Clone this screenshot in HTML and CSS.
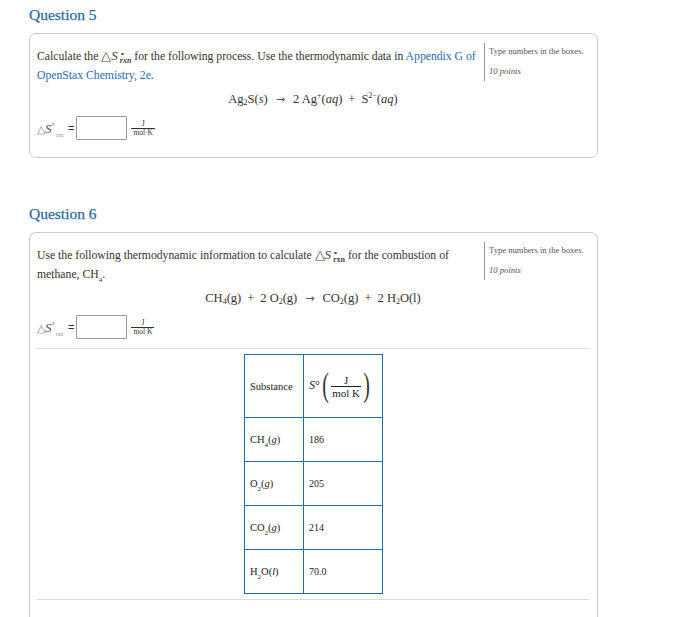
FILE: index.html
```html
<!DOCTYPE html>
<html>
<head>
<meta charset="utf-8">
<link rel="stylesheet" href="styles.css">
</head>
<body>
<main class="page">
  <section class="question">
    <h2 class="q-title">Question 5</h2>
    <div class="card">
      <div class="card-top">
        <div class="prompt">Calculate the <span class="m">△<i>S</i><span class="supsub"><span class="sp">∘</span><span class="sb"><i>rxn</i></span></span></span> for the following process. Use the thermodynamic data in <a class="link">Appendix G of OpenStax Chemistry, 2e</a>.</div>
        <aside class="meta"><p class="meta-note">Type numbers in the boxes.</p><p class="meta-pts">10 points</p></aside>
      </div>
      <div class="equation">Ag<sub>2</sub>S(<i>s</i>)<span class="arrow">→</span>2 Ag<sup>+</sup>(<i>aq</i>)<span class="op">+</span>S<sup>2−</sup>(<i>aq</i>)</div>
      <div class="answer">
        <span class="ds"><span class="tri">△</span><i>S</i><span class="deg">°</span><span class="rxn">rxn</span></span>
        <span class="eq">=</span>
        <span class="box"></span>
        <span class="frac"><span class="num">J</span><span class="den">mol·K</span></span>
      </div>
    </div>
  </section>

  <section class="question q6">
    <h2 class="q-title">Question 6</h2>
    <div class="card open">
      <div class="card-top">
        <div class="prompt">Use the following thermodynamic information to calculate <span class="m">△<i>S</i><span class="supsub"><span class="sp">∘</span><span class="sb">rxn</span></span></span> for the combustion of methane, CH<sub class="low">4</sub>.</div>
        <aside class="meta"><p class="meta-note">Type numbers in the boxes.</p><p class="meta-pts">10 points</p></aside>
      </div>
      <div class="equation">CH<sub>4</sub>(g)<span class="op">+</span>2 O<sub>2</sub>(g)<span class="arrow">→</span>CO<sub>2</sub>(g)<span class="op">+</span>2 H<sub>2</sub>O(l)</div>
      <div class="answer">
        <span class="ds"><span class="tri">△</span><i>S</i><span class="deg">°</span><span class="rxn">rxn</span></span>
        <span class="eq">=</span>
        <span class="box"></span>
        <span class="frac"><span class="num">J</span><span class="den">mol K</span></span>
      </div>
      <div class="divider"></div>
      <table class="data">
        <tr class="head">
          <td>Substance</td>
          <td><span class="sdeg"><i>S</i>°</span><span class="paren">(</span><span class="hfrac"><span class="num">J</span><span class="den">mol K</span></span><span class="paren">)</span></td>
        </tr>
        <tr><td>CH<sub class="low">4</sub>(<i>g</i>)</td><td class="val">186</td></tr>
        <tr><td>O<sub class="low">2</sub>(<i>g</i>)</td><td class="val">205</td></tr>
        <tr><td>CO<sub class="low">2</sub>(<i>g</i>)</td><td class="val">214</td></tr>
        <tr><td>H<sub class="low">2</sub>O(<i>l</i>)</td><td class="val">70.0</td></tr>
      </table>
      <div class="divider bottom"></div>
    </div>
  </section>
</main>
</body>
</html>
```
FILE: styles.css
```css
html, body {
  margin: 0;
  padding: 0;
  background: #fff;
}
body {
  font-family: "Liberation Serif", serif;
  color: #333;
  height: 617px;
  overflow: hidden;
}
.page {
  padding: 0 86px 0 29px;
}
.q-title {
  margin: 0;
  padding-top: 5px;
  font-size: 15.5px;
  font-weight: normal;
  color: #2d6aa3;
  -webkit-text-stroke: 0.25px #2d6aa3;
  line-height: 19px;
  height: 19px;
  margin-bottom: 9px;
}
.q6 {
  margin-top: 41px;
}
.card {
  border: 1px solid #ccc;
  border-radius: 7px;
  padding: 9px 8px 0 7px;
  box-sizing: border-box;
  height: 125px;
}
.card.open {
  height: 420px;
  border-bottom: none;
  border-bottom-left-radius: 0;
  border-bottom-right-radius: 0;
}
.card-top {
  display: flex;
  align-items: flex-start;
}
.prompt {
  width: 440px;
  font-size: 11.7px;
  line-height: 19px;
  padding-top: 3px;
  color: #333;
}
.link {
  color: #2b6cb0;
}
.m {
  font-size: 13px;
  color: #444;
}
.supsub {
  display: inline-block;
  vertical-align: -3px;
  line-height: 6px;
  font-size: 8px;
  margin-left: 2px;
}
.supsub span {
  display: block;
}
.supsub .sb {
  font-weight: bold;
}
.meta {
  margin-left: 7px;
  border-left: 1px solid #999;
  padding: 3px 0 0 4px;
  height: 35px;
}
.meta p {
  margin: 0;
  font-size: 8.6px;
  color: #555;
  line-height: 10px;
  white-space: nowrap;
}
.meta-pts {
  margin-top: 10px !important;
  font-style: italic;
}
.equation {
  font-size: 12.5px;
  color: #333;
  text-align: center;
  margin-top: 4px;
  line-height: 20px;
}
.equation sub, .equation sup {
  font-size: 8px;
  line-height: 0;
}
.equation sub { vertical-align: -2px; }
.equation sup { vertical-align: 5px; }
.arrow {
  display: inline-block;
  margin: 0 8px;
  font-family: "DejaVu Sans", sans-serif;
  font-size: 11px;
  color: #555;
}
.op {
  display: inline-block;
  margin: 0 6px;
}
.answer {
  display: flex;
  align-items: center;
  margin-top: 6px;
  height: 24px;
}
.ds {
  font-size: 13px;
  color: #555;
  position: relative;
  width: 31px;
  line-height: 14px;
}
.tri {
  color: #888;
  font-size: 11px;
}
.deg {
  font-size: 8px;
  vertical-align: 4px;
}
.rxn {
  position: absolute;
  left: 19px;
  top: 12px;
  font-size: 5.5px;
  color: #888;
  line-height: 6px;
}
.eq {
  font-family: "Liberation Sans", sans-serif;
  font-size: 11px;
  color: #333;
  margin-right: 2px;
}
.box {
  width: 49px;
  height: 22px;
  border: 1px solid #999;
  border-radius: 1px;
}
.frac {
  display: inline-flex;
  flex-direction: column;
  align-items: center;
  margin-left: 4px;
  font-size: 7.5px;
  color: #333;
  line-height: 8px;
}
.frac .den {
  border-top: 1px solid #333;
  padding: 0 2px;
}
.divider {
  border-top: 1px solid #ddd;
  margin: 9px 0 5px 0;
}
.divider.bottom {
  margin-top: 5px;
}
.low {
  font-size: 7px;
  vertical-align: -4px;
  line-height: 0;
}
.data {
  border-collapse: collapse;
  margin-left: 207px;
  font-size: 10.5px;
  color: #222;
}
.data td {
  border: 1.5px solid #1f6bb0;
  padding: 0 5px;
  height: 44px;
  box-sizing: border-box;
}
.data td:first-child { width: 59px; }
.data td:last-child { width: 79px; }
.data .head td { height: 63px; }
.data .val {
  font-size: 10px;
}
.sdeg {
  font-size: 12px;
}
.paren {
  display: inline-block;
  font-size: 22px;
  line-height: 20px;
  transform: scale(0.9, 1.5);
  vertical-align: -4px;
  margin: 0 2px;
  color: #333;
}
.hfrac {
  display: inline-flex;
  flex-direction: column;
  align-items: center;
  vertical-align: middle;
  font-size: 11px;
  line-height: 12px;
}
.hfrac .den {
  border-top: 1px solid #222;
  padding: 0 1px;
}
```
